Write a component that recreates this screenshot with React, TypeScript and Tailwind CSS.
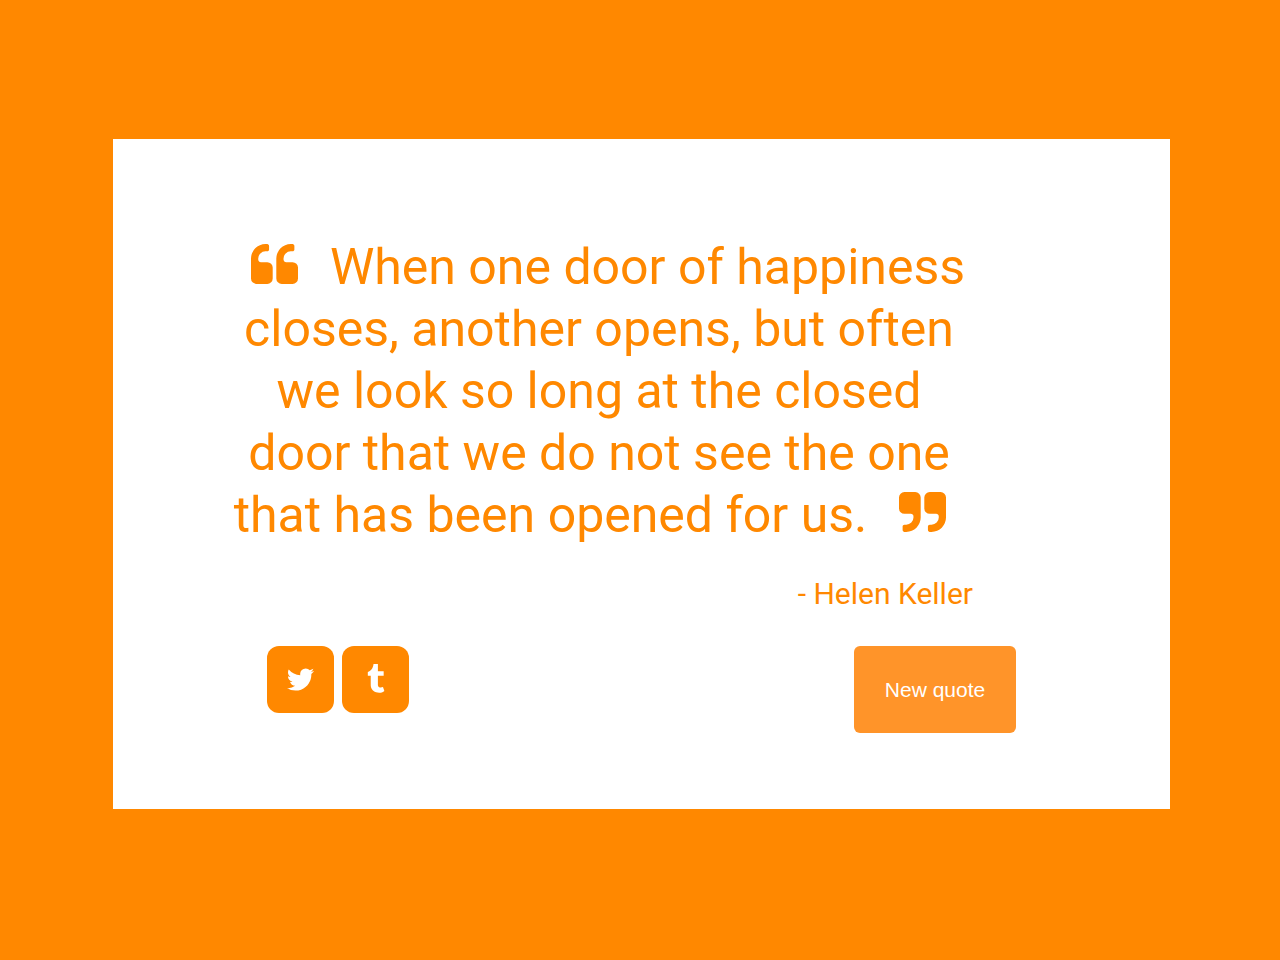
const quote = {
  text: 'When one door of happiness closes, another opens, but often we look so long at the closed door that we do not see the one that has been opened for us.',
  author: 'Helen Keller',
}

const socialClass =
  'flex h-[67px] w-[67px] justify-center rounded-xl bg-[#ff8800] pt-[18px] text-white'

type IconProps = {
  className?: string
}

function QuoteLeft({ className }: IconProps) {
  return (
    <svg viewBox="64 128 1664 1408" fill="currentColor" aria-hidden="true" className={className}>
      <path d="M832 960v384q0 80-56 136t-136 56h-384q-80 0-136-56t-56-136v-704q0-104 40.5-198.5t109.5-163.5 163.5-109.5 198.5-40.5h64q26 0 45 19t19 45v128q0 26-19 45t-45 19h-64q-106 0-181 75t-75 181v32q0 40 28 68t68 28h224q80 0 136 56t56 136zm896 0v384q0 80-56 136t-136 56h-384q-80 0-136-56t-56-136v-704q0-104 40.5-198.5t109.5-163.5 163.5-109.5 198.5-40.5h64q26 0 45 19t19 45v128q0 26-19 45t-45 19h-64q-106 0-181 75t-75 181v32q0 40 28 68t68 28h224q80 0 136 56t56 136z" />
    </svg>
  )
}

function QuoteRight({ className }: IconProps) {
  return (
    <svg viewBox="64 128 1664 1408" fill="currentColor" aria-hidden="true" className={className}>
      <path d="M832 320v704q0 104-40.5 198.5t-109.5 163.5-163.5 109.5-198.5 40.5h-64q-26 0-45-19t-19-45v-128q0-26 19-45t45-19h64q106 0 181-75t75-181v-32q0-40-28-68t-68-28h-224q-80 0-136-56t-56-136v-384q0-80 56-136t136-56h384q80 0 136 56t56 136zm896 0v704q0 104-40.5 198.5t-109.5 163.5-163.5 109.5-198.5 40.5h-64q-26 0-45-19t-19-45v-128q0-26 19-45t45-19h64q106 0 181-75t75-181v-32q0-40-28-68t-68-28h-224q-80 0-136-56t-56-136v-384q0-80 56-136t136-56h384q80 0 136 56t56 136z" />
    </svg>
  )
}

function Twitter() {
  return (
    <svg viewBox="0 0 1792 1792" fill="currentColor" aria-hidden="true" className="h-[31px] w-[31px]">
      <path d="M1684 408q-67 98-162 167 1 14 1 42 0 130-38 259.5t-115.5 248.5-184.5 210.5-258 146-323 54.5q-271 0-496-145 35 4 78 4 225 0 401-138-105-2-188-64.5t-114-159.5q33 5 61 5 43 0 85-11-112-23-185.5-111.5t-73.5-205.5v-4q68 38 146 41-66-44-105-115t-39-154q0-88 44-163 121 149 294.5 238.5t371.5 99.5q-8-38-8-74 0-134 94.5-228.5t228.5-94.5q140 0 236 102 109-21 205-78-37 115-142 178 93-10 186-50z" />
    </svg>
  )
}

function Tumblr() {
  return (
    <svg viewBox="0 0 1792 1792" fill="currentColor" aria-hidden="true" className="h-[31px] w-[31px]">
      <path d="M1328 1329l80 237q-23 35-111 66t-177 32q-104 2-190.5-26t-142.5-74-95-106-55.5-120-16.5-118v-544h-168v-215q72-26 129-69.5t91-90 58-102 34-99 15-88.5q1-5 4.5-8.5t7.5-3.5h244v424h333v252h-334v518q0 30 6.5 56t22.5 52.5 49.5 41.5 81.5 14q78-2 134-29z" />
    </svg>
  )
}

export default function App() {
  return (
    <main className="flex min-h-screen items-center bg-[#ff8800] pr-[110px] pb-3 pl-[113px] font-['Roboto',sans-serif] text-[#ff8800]">
      <section className="w-full bg-white px-[116px] pt-[97px] pb-[76px]">
        <blockquote className="w-[740px] max-w-full text-center text-[50px] leading-[62px]">
          <QuoteLeft className="mr-8 ml-[18px] inline h-10 w-[47px] align-baseline" />
          {quote.text}
          <QuoteRight className="mr-[18px] ml-8 inline h-10 w-[47px] align-baseline" />
        </blockquote>
        <p className="mt-[30px] w-[744px] max-w-full text-right text-[30px] leading-[36px]">
          - {quote.author}
        </p>
        <div className="mt-[34px] flex items-start justify-between px-[38px]">
          <div className="flex gap-2">
            <a href="#twitter" aria-label="Tweet this quote" className={socialClass}>
              <Twitter />
            </a>
            <a href="#tumblr" aria-label="Post to Tumblr" className={socialClass}>
              <Tumblr />
            </a>
          </div>
          <button className="h-[87px] w-[162px] rounded-md bg-[#ff9429] font-['Liberation_Sans',sans-serif] text-[21px] text-white">
            New quote
          </button>
        </div>
      </section>
    </main>
  )
}
